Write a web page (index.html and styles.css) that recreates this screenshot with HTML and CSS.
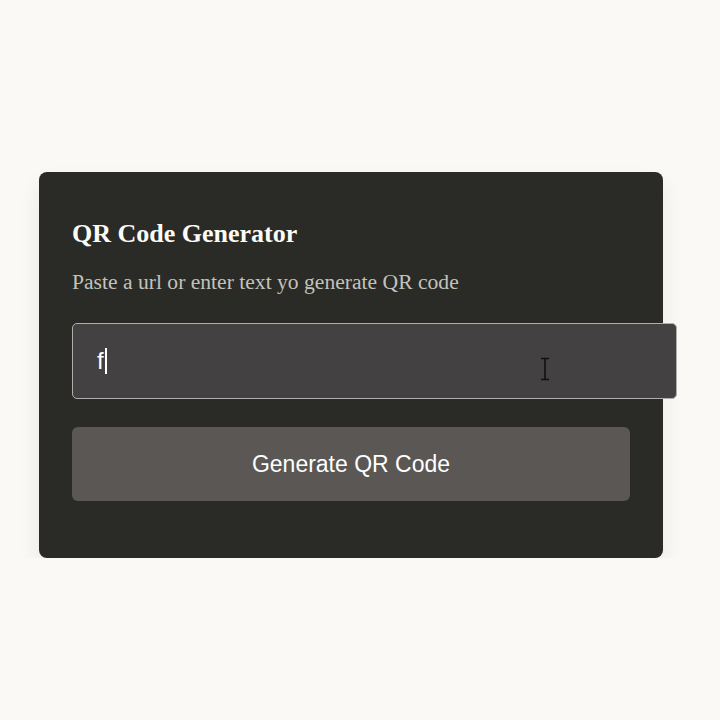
FILE: index.html
```html
<!DOCTYPE html>
<html lang="en">
<head>
<meta charset="utf-8">
<title>QR Code Generator</title>
<link rel="stylesheet" href="styles.css">
</head>
<body>
<main class="page">
  <section class="card">
    <h2 class="title">QR Code Generator</h2>
    <p class="subtitle">Paste a url or enter text yo generate QR code</p>
    <div class="field">
      <div class="input"><span class="value">f</span><span class="caret"></span></div>
      <svg class="ibeam" width="10" height="24" viewBox="0 0 10 24" aria-hidden="true">
        <path d="M1 1.5h8M1 22.5h8M5 1.5v21" stroke="#111" stroke-width="1.6" fill="none"/>
      </svg>
    </div>
    <button class="btn" type="button">Generate QR Code</button>
  </section>
</main>
</body>
</html>
```
FILE: styles.css
```css
html, body {
  margin: 0;
  padding: 0;
  background: #faf9f5;
}
.page {
  padding: 172px 0 0 39px;
  font-family: "Liberation Serif", "Times New Roman", serif;
}
.card {
  width: 624px;
  box-sizing: border-box;
  background: #2a2a27;
  border-radius: 8px;
  padding: 47px 33px 57px;
  display: flex;
  flex-direction: column;
  box-shadow: 0 12px 22px rgba(60, 40, 40, 0.08);
}
.title {
  margin: 0;
  font-size: 26px;
  line-height: 30px;
  font-weight: bold;
  color: #fbfbf7;
}
.subtitle {
  margin: 20px 0 0;
  font-size: 21.6px;
  line-height: 26px;
  color: #c4c2bc;
}
.field {
  position: relative;
  margin-top: 28px;
}
.input {
  width: 605px;
  height: 76px;
  box-sizing: border-box;
  background: #444143;
  border: 1.5px solid #b0aeab;
  border-radius: 5px;
  padding: 0 24px;
  display: flex;
  align-items: center;
  font-family: "Liberation Sans", Arial, sans-serif;
  font-size: 24px;
  color: #ffffff;
}
.caret {
  display: inline-block;
  width: 2px;
  height: 26px;
  background: #ffffff;
  margin-left: 1px;
}
.ibeam {
  position: absolute;
  left: 468px;
  top: 34px;
}
.btn {
  margin-top: 28px;
  height: 74px;
  width: 100%;
  border: none;
  border-radius: 6px;
  background: #5a5755;
  color: #ffffff;
  font-family: "Liberation Sans", Arial, sans-serif;
  font-size: 23px;
  padding: 0;
}
```
